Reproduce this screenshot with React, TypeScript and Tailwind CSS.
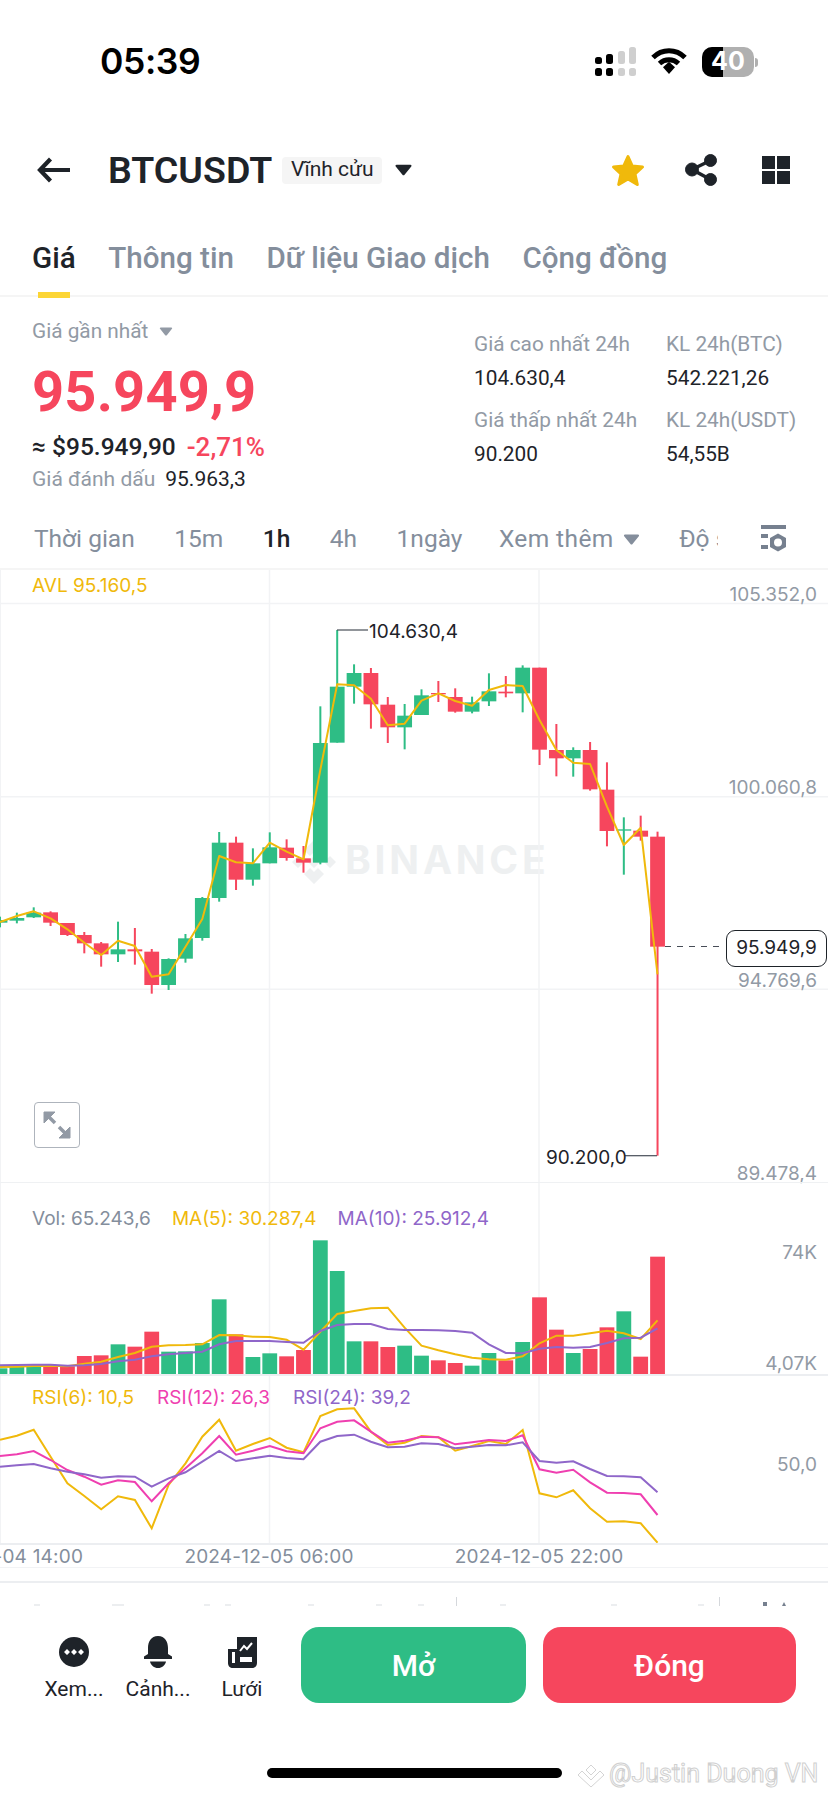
// Binance futures BTCUSDT chart screen
type Candle = [up: number, top: number, bottom: number, high: number, low: number];

const GREEN = '#2ebd85';
const RED = '#f6465d';
const YELLOW = '#f0b90b';
const PURPLE = '#8f66c9';
const PINK = '#ef3fb0';
const GRID = '#f2f3f5';
const STEP = 16.86;

// values are pixels relative to y=570, times 3
const candles: Candle[] = [
  [1, 1050, 1058, 1040, 1072],
  [1, 1044, 1052, 1028, 1060],
  [1, 1028, 1042, 1012, 1044],
  [0, 1027, 1058, 1024, 1068],
  [0, 1059, 1095, 1059, 1098],
  [0, 1095, 1120, 1086, 1150],
  [0, 1120, 1153, 1116, 1190],
  [1, 1138, 1153, 1055, 1176],
  [0, 1138, 1144, 1074, 1184],
  [0, 1145, 1245, 1137, 1271],
  [1, 1167, 1245, 1165, 1260],
  [1, 1105, 1166, 1092, 1178],
  [1, 984, 1104, 981, 1112],
  [1, 818, 984, 786, 995],
  [0, 818, 929, 800, 960],
  [1, 880, 929, 835, 947],
  [1, 832, 880, 787, 880],
  [0, 833, 864, 808, 872],
  [0, 865, 878, 828, 908],
  [1, 519, 878, 409, 883],
  [1, 350, 518, 180, 518],
  [1, 309, 350, 283, 401],
  [0, 309, 403, 294, 476],
  [0, 404, 472, 381, 519],
  [1, 437, 472, 402, 538],
  [1, 376, 435, 358, 435],
  [0, 369, 373, 333, 396],
  [0, 381, 425, 355, 428],
  [1, 397, 425, 380, 430],
  [1, 364, 394, 310, 408],
  [0, 365, 370, 318, 382],
  [1, 293, 370, 286, 427],
  [0, 293, 539, 293, 585],
  [0, 540, 565, 462, 619],
  [1, 540, 565, 532, 620],
  [0, 540, 658, 516, 662],
  [0, 659, 783, 577, 829],
  [1, 778, 782, 742, 914],
  [0, 782, 800, 737, 812],
  [0, 800, 1130, 785, 1757],
];

const avl = [1056, 1038, 1024, 1045, 1078, 1118, 1155, 1112, 1128, 1220, 1213, 1130, 1047, 858, 877, 880, 818, 845, 868, 600, 343, 346, 386, 466, 461, 392, 370, 393, 407, 360, 345, 348, 450, 540, 578, 582, 710, 825, 773, 1213];

// volume panel, relative to y=1000, times 3
const volTops = [1102, 1098, 1097, 1096, 1096, 1065, 1063, 1030, 1037, 992, 1052, 1051, 1026, 895, 1000, 1068, 1057, 1066, 1047, 718, 810, 1021, 1021, 1038, 1034, 1064, 1078, 1086, 1094, 1056, 1078, 1023, 889, 986, 1056, 1044, 979, 931, 1067, 767];
const ma5 = [1098, 1097, 1095, 1094, 1096, 1088, 1082, 1068, 1056, 1037, 1033, 1032, 1030, 1002, 1003, 1007, 1008, 1016, 1046, 992, 939, 930, 922, 920, 980, 1034, 1048, 1060, 1070, 1075, 1076, 1066, 1027, 1004, 1004, 997, 989, 997, 1014, 958];
const ma10 = [1093, 1092, 1091, 1091, 1094, 1093, 1089, 1081, 1076, 1066, 1060, 1056, 1052, 1030, 1020, 1020, 1020, 1023, 1025, 990, 972, 969, 969, 984, 987, 987, 988, 990, 995, 1030, 1056, 1057, 1043, 1038, 1040, 1038, 1026, 1012, 1010, 982];

// rsi panel, relative to y=1360, times 3
const rsi6 = [239, 227, 209, 290, 370, 408, 448, 409, 420, 505, 375, 310, 230, 179, 272, 252, 234, 263, 277, 168, 148, 145, 215, 255, 248, 228, 232, 272, 258, 243, 252, 210, 400, 412, 391, 445, 485, 484, 490, 548];
const rsi12 = [288, 283, 273, 300, 330, 350, 374, 361, 366, 424, 370, 325, 280, 228, 284, 272, 258, 274, 280, 205, 185, 181, 215, 248, 242, 230, 232, 253, 247, 240, 243, 226, 328, 338, 329, 367, 398, 399, 403, 465];
const rsi24 = [320, 316, 312, 325, 335, 343, 353, 349, 350, 380, 355, 337, 305, 273, 303, 295, 287, 294, 298, 245, 228, 224, 245, 262, 260, 250, 252, 265, 260, 255, 256, 247, 303, 308, 304, 327, 348, 349, 352, 397];

const pts = (vals: number[], base: number) => vals.map((v, i) => `${(i * STEP).toFixed(1)},${(base + v / 3).toFixed(1)}`).join(' ');

function Triangle({ className }: { className: string }) {
  return (
    <svg viewBox="0 0 16 11" className={className} fill="currentColor">
      <path d="M1.5 0.5h13c1 0 1.300 1 .8 1.700L9 10c-.5.7-1.500.7-2 0L.7 2.200C.2 1.500.5.5 1.500.5z" />
    </svg>
  );
}

function StatusBar() {
  return (
    <div className="flex h-[130px] items-start justify-between pl-[100px] pr-[70px] pt-[40px]">
      <span className="text-[35.5px] leading-[44px] font-semibold tracking-[-0.4px] text-black [font-family:Inter,sans-serif]">05:39</span>
      <div className="flex items-start gap-[15px] pt-[7px]">
        <svg width="41" height="30" viewBox="594 47 41 30">
          <rect x="594" y="57" width="7" height="7" rx="2.500" fill="#000" />
          <rect x="605" y="54" width="7" height="10" rx="2.500" fill="#000" />
          <rect x="617" y="51" width="7" height="13" rx="2.500" fill="#cfcfcf" />
          <rect x="628" y="47" width="7" height="17" rx="2.500" fill="#cfcfcf" />
          <rect x="594" y="68" width="7" height="8" rx="2.500" fill="#000" />
          <rect x="605" y="68" width="7" height="8" rx="2.500" fill="#000" />
          <rect x="617" y="68" width="7" height="8" rx="2.500" fill="#cfcfcf" />
          <rect x="628" y="68" width="7" height="8" rx="2.500" fill="#cfcfcf" />
        </svg>
        <svg width="36" height="28" viewBox="0 0 36 28" fill="none" stroke="#000" strokeWidth="5">
          <path d="M2 10.500C11 1.500 25 1.500 34 10.500" />
          <path d="M8.500 16.500C14 11.500 22 11.500 27.500 16.500" />
          <path d="M12 20.200L18 14.800L24 20.200L18 27Z" fill="#000" stroke="none" />
        </svg>
        <div className="flex items-center">
          <div className="relative flex h-[30px] w-[52px] overflow-hidden rounded-[10px] bg-[#b0b0b0]">
            <div className="h-full w-[21px] bg-black" />
            <span className="absolute inset-0 flex items-center justify-center text-[25px] font-bold text-white [font-family:Inter,sans-serif]">40</span>
          </div>
          <div className="ml-[1px] h-[9px] w-[3px] rounded-r-full bg-[#b0b0b0]" />
        </div>
      </div>
    </div>
  );
}

function Header() {
  return (
    <div className="flex h-[80px] items-center pl-[37px] pr-[38px]">
      <svg width="33" height="26" viewBox="0 0 33 26" fill="none" stroke="#1e2329" strokeWidth="4.200">
        <path d="M13.500 2L3 13L13.500 24M3.500 13H33" />
      </svg>
      <span className="ml-[38px] mt-[2px] text-[37.5px] font-semibold leading-none text-[#1e2329] [font-family:Roboto,sans-serif]">BTCUSDT</span>
      <span className="ml-[10px] flex h-[27px] w-[100px] items-center justify-center rounded-[4px] bg-[#f5f5f5] text-[21px] text-[#1e2329] [font-family:Roboto,sans-serif]">Vĩnh cửu</span>
      <Triangle className="ml-[13px] h-[12px] w-[17px] text-[#1e2329]" />
      <svg className="ml-auto -translate-x-[1px]" width="34" height="33" viewBox="0 0 34 33" fill={YELLOW} stroke={YELLOW} strokeWidth="3" strokeLinejoin="round">
        <path d="M17 2.500L21.300 12L31.500 13L24 20L26.300 30.500L17 25L7.700 30.500L10 20L2.500 13L12.700 12Z" />
      </svg>
      <svg className="ml-[39px]" width="33" height="32" viewBox="0 0 33 32" fill="#1e2329" stroke="#1e2329">
        <circle cx="25.500" cy="6.500" r="6" />
        <circle cx="7" cy="15.500" r="6.500" />
        <circle cx="25.500" cy="25.500" r="6" />
        <path d="M25.500 6.500L7 15.500L25.500 25.500" fill="none" strokeWidth="3.500" />
      </svg>
      <div className="ml-[44px] grid grid-cols-2 gap-[2px]">
        <div className="h-[13px] w-[13px] bg-[#1e2329]" />
        <div className="h-[13px] w-[13px] bg-[#1e2329]" />
        <div className="h-[13px] w-[13px] bg-[#1e2329]" />
        <div className="h-[13px] w-[13px] bg-[#1e2329]" />
      </div>
    </div>
  );
}

function Tabs() {
  return (
    <div className="relative flex h-[87px] items-start gap-[32.5px] border-b-2 border-[#f5f5f5] pl-[32px] pt-[28px] text-[29.6px] font-medium leading-[40px] text-[#848e9c] [font-family:Roboto,sans-serif]">
      <div className="relative h-[59px]">
        <span className="text-[#1e2329]">Giá</span>
        <div className="absolute bottom-[-1px] left-[6px] h-[6px] w-[32px] bg-[#fcd535]" />
      </div>
      <span>Thông tin</span>
      <span>Dữ liệu Giao dịch</span>
      <span>Cộng đồng</span>
    </div>
  );
}

function Stat({ label, value }: { label: string; value: string }) {
  return (
    <div className="flex h-[76px] flex-col">
      <span className="text-[20.8px] leading-[34px] text-[#929aa5]">{label}</span>
      <span className="text-[20.8px] leading-[34px] text-[#1e2329]">{value}</span>
    </div>
  );
}

function Stats() {
  return (
    <div className="flex h-[214px] [font-family:Roboto,sans-serif]">
      <div className="w-[442px] pl-[32px] pt-[21px]">
        <div className="flex items-center gap-[11px] text-[20.8px] leading-[26px] text-[#929aa5]">
          Giá gần nhất
          <Triangle className="h-[9px] w-[14px] text-[#929aa5]" />
        </div>
        <div className="mt-[18px] text-[56px] font-bold leading-[60px] tracking-[0.2px] text-[#f6465d]">95.949,9</div>
        <div className="mt-[10px] flex items-center gap-[11px] text-[24.5px] font-medium leading-[30px]">
          <span className="text-[#1e2329]">≈ $95.949,90</span>
          <span className="text-[26px] text-[#f6465d]">-2,71%</span>
        </div>
        <div className="mt-[4px] flex gap-[10px] text-[21px] leading-[26px]">
          <span className="text-[#929aa5]">Giá đánh dấu</span>
          <span className="text-[#1e2329]">95.963,3</span>
        </div>
      </div>
      <div className="grid grid-cols-[192px_1fr] content-start pl-[32px] pt-[30px]">
        <Stat label="Giá cao nhất 24h" value="104.630,4" />
        <Stat label="KL 24h(BTC)" value="542.221,26" />
        <Stat label="Giá thấp nhất 24h" value="90.200" />
        <Stat label="KL 24h(USDT)" value="54,55B" />
      </div>
    </div>
  );
}

function Toolbar() {
  return (
    <div className="relative flex h-[57px] items-center gap-[39.5px] pl-[34px] text-[24.5px] text-[#848e9c] [font-family:Roboto,sans-serif]">
      <span>Thời gian</span>
      <span>15m</span>
      <span className="font-medium text-[#1e2329]">1h</span>
      <span>4h</span>
      <span>1ngày</span>
      <span className="-ml-[3px] flex items-center gap-[9px] tracking-[0.4px]">
        Xem thêm
        <Triangle className="h-[11px] w-[17px] text-[#848e9c]" />
      </span>
      <span className="w-[39px] overflow-hidden whitespace-nowrap">Độ sâu</span>
      <svg className="absolute left-[760px] top-[14px]" width="27" height="27" viewBox="0 0 27 27" fill="#76808f">
        <rect x="1" y="0" width="25" height="4" />
        <rect x="1" y="9" width="7" height="4" />
        <rect x="1" y="20" width="7" height="4" />
        <path fillRule="evenodd" d="M18 8.500L26 13V22L18 26.500L10 22V13ZM18 13.500A4 4 0 1 0 18 21.500A4 4 0 1 0 18 13.500Z" />
      </svg>
    </div>
  );
}

function AxisLabel({ className, children }: { className: string; children: string }) {
  return <span className={`absolute right-[11px] text-[19px] leading-[24px] text-[#929aa5] ${className}`}>{children}</span>;
}

function GridLines({ y1, y2 }: { y1: number; y2: number }) {
  return (
    <>
      <line x1="269.500" x2="269.500" y1={y1} y2={y2} stroke={GRID} strokeWidth="1.500" />
      <line x1="539" x2="539" y1={y1} y2={y2} stroke={GRID} strokeWidth="1.500" />
      <line x1="0.500" x2="0.500" y1={y1} y2={y2} stroke={GRID} />
    </>
  );
}

function MainChart() {
  return (
    <div className="relative h-[614px] border-t-2 border-[#f5f5f5]">
      {/* watermark */}
      <svg className="absolute left-[290px] top-[268px]" width="48" height="48" viewBox="0 0 48 48" fill="#eef0f1">
        <path d="M24 2L34 12L28 18L24 14L20 18L14 12ZM8 18L14 24L8 30L2 24ZM40 18L46 24L40 30L34 24ZM24 18L30 24L24 30L18 24ZM14 36L20 30L24 34L28 30L34 36L24 46Z" />
      </svg>
      <span className="absolute left-[345px] top-[264px] text-[39px] font-bold leading-[52px] tracking-[3.800px] text-[#eef0f1] [font-family:Inter,sans-serif]">BINANCE</span>
      <svg className="absolute inset-0" width="828" height="612" viewBox="0 570 828 612">
        <line x1="0" x2="828" y1="603.500" y2="603.500" stroke={GRID} strokeWidth="1.500" />
        <line x1="0" x2="828" y1="796.700" y2="796.700" stroke={GRID} strokeWidth="1.500" />
        <line x1="0" x2="828" y1="989.300" y2="989.300" stroke={GRID} strokeWidth="1.500" />
        <GridLines y1={570} y2={1182} />
        {candles.map(([up, top, bottom, high, low], i) => {
          const x = i * STEP;
          const color = up ? GREEN : RED;
          return (
            <g key={i} fill={color}>
              <rect x={x - 1} y={570 + high / 3} width="2" height={(low - high) / 3} />
              <rect x={x - 7.4} y={570 + top / 3} width="14.800" height={(bottom - top) / 3} />
            </g>
          );
        })}
        <polyline points={pts(avl, 570)} fill="none" stroke={YELLOW} strokeWidth="2" strokeLinejoin="round" />
        <path d="M337 630H368" stroke="#474d57" strokeWidth="1.200" />
        <path d="M625 1155.700H657" stroke="#474d57" strokeWidth="1.200" />
        <line x1="665" x2="722" y1="946.500" y2="946.500" stroke="#474d57" strokeWidth="1.200" strokeDasharray="6 6" />
      </svg>
      <div className="relative pl-[32px] pt-[4px] text-[19px] leading-[24px] text-[#f0b90b]">AVL 95.160,5</div>
      <AxisLabel className="top-[13px]">105.352,0</AxisLabel>
      <AxisLabel className="top-[206px]">100.060,8</AxisLabel>
      <AxisLabel className="top-[399px]">94.769,6</AxisLabel>
      <AxisLabel className="top-[592px]">89.478,4</AxisLabel>
      <span className="absolute left-[369px] top-[50px] text-[19px] leading-[24px] text-[#1e2329]">104.630,4</span>
      <span className="absolute left-[546px] top-[576px] text-[19px] leading-[24px] text-[#1e2329]">90.200,0</span>
      <div className="absolute left-[726px] top-[360px] flex h-[37px] w-[101px] items-center justify-center rounded-[9px] border border-[#1e2329] bg-white text-[19px] text-[#1e2329]">95.949,9</div>
      <div className="absolute left-[34px] top-[532px] flex h-[46px] w-[46px] items-center justify-center rounded-[4px] border border-[#aeb4bc] bg-white">
        <svg width="28" height="28" viewBox="0 0 28 28" fill="#929aa5" stroke="#929aa5">
          <path d="M1 1H12L1 12Z" />
          <path d="M27 27H16L27 16Z" />
          <path d="M5 5L12 12M16 16L23 23" strokeWidth="3.500" />
        </svg>
      </div>
    </div>
  );
}

function VolumeChart() {
  return (
    <div className="relative h-[192px] border-t border-[#eff1f3]">
      <svg className="absolute inset-0" width="828" height="192" viewBox="0 1182 828 192">
        <GridLines y1={1182} y2={1374} />
        {volTops.map((top, i) => (
          <rect
            key={i}
            x={i * STEP - 7.4}
            y={1000 + top / 3}
            width="14.800"
            height={1374 - (1000 + top / 3)}
            fill={candles[i][0] ? GREEN : RED}
          />
        ))}
        <polyline points={pts(ma5, 1000)} fill="none" stroke={YELLOW} strokeWidth="2" />
        <polyline points={pts(ma10, 1000)} fill="none" stroke={PURPLE} strokeWidth="2" />
      </svg>
      <div className="relative flex gap-[21px] pl-[32px] pt-[24px] text-[19px] leading-[24px]">
        <span className="text-[#848e9c]">Vol: 65.243,6</span>
        <span className="text-[#f0b90b]">MA(5): 30.287,4</span>
        <span className="text-[#8f66c9]">MA(10): 25.912,4</span>
      </div>
      <AxisLabel className="top-[58px]">74K</AxisLabel>
      <AxisLabel className="top-[169px]">4,07K</AxisLabel>
    </div>
  );
}

function RsiChart() {
  return (
    <div className="relative h-[169px] border-t-2 border-[#eceef1]">
      <svg className="absolute inset-0" width="828" height="167" viewBox="0 1376 828 167">
        <GridLines y1={1376} y2={1543} />
        <polyline points={pts(rsi6, 1360)} fill="none" stroke={YELLOW} strokeWidth="2" />
        <polyline points={pts(rsi12, 1360)} fill="none" stroke={PINK} strokeWidth="2" />
        <polyline points={pts(rsi24, 1360)} fill="none" stroke={PURPLE} strokeWidth="2" />
      </svg>
      <div className="relative flex gap-[23px] pl-[32px] pt-[10px] text-[19px] leading-[24px]">
        <span className="text-[#f0b90b]">RSI(6): 10,5</span>
        <span className="text-[#ef3fb0]">RSI(12): 26,3</span>
        <span className="text-[#8f66c9]">RSI(24): 39,2</span>
      </div>
      <AxisLabel className="top-[77px]">50,0</AxisLabel>
    </div>
  );
}

function TimeAxis() {
  return (
    <div className="relative h-[38px] overflow-hidden border-t-2 border-[#eceef1]">
      <div className="h-[23px] border-b border-[#f2f3f5]" />
      <span className="absolute left-0 top-0 -translate-x-1/2 whitespace-nowrap text-[19px] leading-[24px] tracking-[0.2px] text-[#848e9c]">2024-12-04 14:00</span>
      <span className="absolute left-[269px] top-0 -translate-x-1/2 whitespace-nowrap text-[19px] leading-[24px] tracking-[0.2px] text-[#848e9c]">2024-12-05 06:00</span>
      <span className="absolute left-[539px] top-0 -translate-x-1/2 whitespace-nowrap text-[19px] leading-[24px] tracking-[0.2px] text-[#848e9c]">2024-12-05 22:00</span>
    </div>
  );
}

// tops of the table that scrolls away under the bottom bar
function PeekRow() {
  return (
    <div className="h-[25px] border-t-2 border-[#eceef1]">
      <svg width="828" height="23" viewBox="0 1583 828 23">
        <rect x="456" y="1597" width="1" height="9" fill="#d5d8dc" />
        <rect x="719" y="1597" width="1" height="9" fill="#d5d8dc" />
        <rect x="763" y="1602" width="4" height="4" fill="#76808f" />
        <path d="M782 1606L784 1602L786 1606Z" fill="#76808f" />
        {[34, 112, 118, 204, 225, 308, 376, 418, 500, 611, 698].map((x) => (
          <rect key={x} x={x} y="1604" width="6" height="2" fill="#eceef0" />
        ))}
      </svg>
    </div>
  );
}

function BottomItem({ label, children }: { label: string; children: React.ReactNode }) {
  return (
    <div className="flex w-[84px] flex-col items-center pt-[9px]">
      <div className="flex h-[32px] items-center justify-center">{children}</div>
      <span className="mt-[7px] text-[21px] leading-[28px] text-[#1e2329] [font-family:Roboto,sans-serif]">{label}</span>
    </div>
  );
}

function BottomBar() {
  return (
    <div className="relative h-[190px]">
      <div className="flex pl-[32px] pt-[21px]">
        <BottomItem label="Xem...">
          <svg width="30" height="30" viewBox="0 0 30 30">
            <circle cx="15" cy="15" r="15" fill="#1e2329" />
            <path d="M8 12L11 15L8 18L5 15ZM15 12L18 15L15 18L12 15ZM22 12L25 15L22 18L19 15Z" fill="#fff" />
          </svg>
        </BottomItem>
        <BottomItem label="Cảnh...">
          <svg width="28" height="32" viewBox="0 0 28 32" fill="#1e2329">
            <path d="M14 0C7 0 4 6 4 12V18L0 20.500V23H28V20.500L24 18V12C24 6 21 0 14 0Z" />
            <path d="M6 25.500H22C21 29.500 18 32 14 32C10 32 7 29.500 6 25.500Z" />
          </svg>
        </BottomItem>
        <BottomItem label="Lưới">
          <svg width="29" height="31" viewBox="0 0 29 31">
            <path d="M9 0H29V26C29 29 27 31 24 31H5C2 31 0 29 0 26V12H9Z" fill="#1e2329" />
            <rect x="4" y="15" width="3" height="11" fill="#fff" />
            <rect x="12" y="20" width="12" height="5" fill="#fff" />
            <path d="M12 14L16 9L19 12L24 6" fill="none" stroke="#fff" strokeWidth="2" />
          </svg>
        </BottomItem>
        <button className="ml-[17px] h-[76px] w-[225px] rounded-[18px] bg-[#2ebd85] text-[30px] font-medium text-white [font-family:Roboto,sans-serif]">Mở</button>
        <button className="ml-[17px] h-[76px] w-[253px] rounded-[18px] bg-[#f6465d] text-[30px] font-medium text-white [font-family:Roboto,sans-serif]">Đóng</button>
      </div>
      <div className="mx-auto mt-[65px] h-[10px] w-[295px] rounded-full bg-black" />
      <svg className="absolute left-[577px] top-[158px]" width="28" height="24" viewBox="0 0 28 24" fill="none" stroke="#d4d4d4" strokeWidth="1">
        <path d="M14 1L19 6L14 11L9 6ZM5 7L14 16L23 7L27 11L14 23L1 11Z" />
      </svg>
      <span className="absolute left-[609px] top-[152px] whitespace-nowrap text-[25px] leading-[32px] text-white [-webkit-text-stroke:1px_#d0d0d0] [font-family:Roboto,sans-serif]">@Justin Duong VN</span>
    </div>
  );
}

export default function App() {
  return (
    <div className="flex h-[1796px] w-[828px] flex-col overflow-hidden bg-white [font-family:Inter,sans-serif]">
      <StatusBar />
      <Header />
      <Tabs />
      <Stats />
      <Toolbar />
      <MainChart />
      <VolumeChart />
      <RsiChart />
      <TimeAxis />
      <PeekRow />
      <BottomBar />
    </div>
  );
}
